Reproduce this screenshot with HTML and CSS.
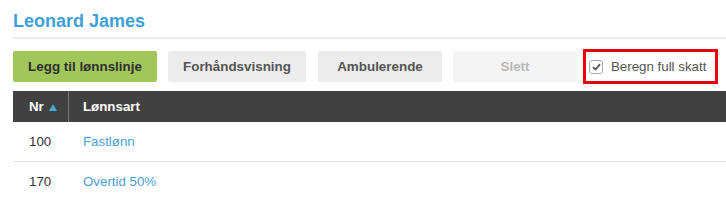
FILE: index.html
```html
<!DOCTYPE html>
<html lang="no">
<head>
<meta charset="utf-8">
<link rel="stylesheet" href="styles.css">
</head>
<body>
<div class="page">
  <h1 class="title">Leonard James</h1>
  <div class="toolbar">
    <button class="btn btn-primary">Legg til lønnslinje</button>
    <button class="btn btn-preview">Forhåndsvisning</button>
    <button class="btn btn-wide">Ambulerende</button>
    <button class="btn btn-wide btn-disabled">Slett</button>
    <label class="check-box">
      <span class="check">
        <svg width="9" height="8" viewBox="0 0 9 8"><path d="M1 4.2 L3.5 6.5 L8 1.2" fill="none" stroke="#555" stroke-width="1.8"/></svg>
      </span>
      <span class="check-label">Beregn full skatt</span>
    </label>
  </div>
  <div class="table">
    <div class="row head">
      <div class="cell nr">Nr <svg class="sort" width="8" height="7" viewBox="0 0 8 7"><path d="M4 0 L8 7 L0 7 Z" fill="#4aa9d6"/></svg></div>
      <div class="cell name">Lønnsart</div>
    </div>
    <div class="row">
      <div class="cell nr">100</div>
      <div class="cell name"><a class="link">Fastlønn</a></div>
    </div>
    <div class="row">
      <div class="cell nr">170</div>
      <div class="cell name"><a class="link">Overtid 50%</a></div>
    </div>
  </div>
</div>
</body>
</html>
```
FILE: styles.css
```css
html, body {
  margin: 0;
  padding: 0;
  background: #fff;
}
body {
  font-family: "Liberation Sans", Arial, sans-serif;
  color: #333;
}
.page {
  padding: 0 0 0 13px;
}
.title {
  margin: 0;
  padding-top: 11px;
  height: 26px;
  font-size: 18px;
  font-weight: bold;
  line-height: 21px;
  color: #3f9fd8;
  border-bottom: 2px solid #ebebeb;
}
.toolbar {
  display: flex;
  align-items: center;
  margin-top: 10px;
  height: 35px;
}
.btn {
  font-family: "Liberation Sans", Arial, sans-serif;
  font-size: 13.4px;
  font-weight: bold;
  height: 31px;
  border: none;
  border-radius: 2px;
  background: #ececec;
  color: #555;
  padding: 0;
  white-space: nowrap;
  margin-right: 11px;
}
.btn-primary {
  background: #a1c75b;
  color: #2f2f2f;
  width: 144px;
}
.btn-preview {
  width: 138px;
  margin-right: 12px;
}
.btn-wide {
  width: 124px;
}
.btn-disabled {
  background: #f4f4f4;
  color: #b8b8b8;
  margin-right: 6px;
}
.check-box {
  display: flex;
  align-items: center;
  box-sizing: border-box;
  width: 135px;
  height: 35px;
  border: 3px solid #e8000b;
  padding-left: 3px;
}
.check {
  box-sizing: border-box;
  width: 14px;
  height: 14px;
  border: 1px solid #aaa;
  border-radius: 3px;
  display: flex;
  align-items: center;
  justify-content: center;
  background: #fff;
  margin-right: 8px;
}
.check-label {
  font-size: 13.3px;
  color: #555;
}
.table {
  margin-top: 7px;
}
.row {
  display: flex;
  height: 39px;
  border-bottom: 1px solid #e3e3e3;
  align-items: center;
  font-size: 13.3px;
}
.row.head {
  height: 31px;
  background: #414141;
  color: #fff;
  font-weight: bold;
  border-bottom: none;
}
.cell.nr {
  box-sizing: border-box;
  width: 56px;
  padding-left: 16px;
  align-self: stretch;
  display: flex;
  align-items: center;
}
.head .cell.nr {
  border-right: 1px solid #7a7a7a;
}
.cell.name {
  padding-left: 14px;
}
.sort {
  margin-left: 5px;
  margin-top: 1px;
}
.link {
  color: #4b9fd8;
  text-decoration: none;
}
```
